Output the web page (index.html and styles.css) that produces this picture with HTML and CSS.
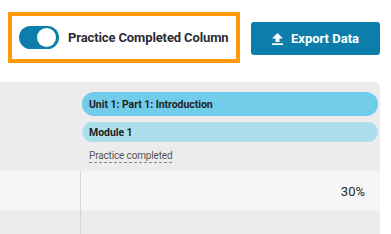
FILE: index.html
```html
<!DOCTYPE html>
<html>
<head>
<meta charset="utf-8">
<link rel="stylesheet" href="styles.css">
</head>
<body>
<div class="page">
  <div class="toolbar">
    <div class="highlight">
      <span class="switch"><span class="knob"></span></span>
      <span class="switch-label">Practice Completed Column</span>
    </div>
    <button class="export">
      <svg class="export-icon" width="11" height="12" viewBox="0 0 11 12">
        <path d="M5.5 0 L11 5.5 H7.5 V9 H3.5 V5.5 H0 Z" fill="#fff"/>
        <rect x="0" y="10.3" width="11" height="1.7" fill="#fff"/>
      </svg>
      <span>Export Data</span>
    </button>
  </div>
  <div class="table">
    <div class="head">
      <div class="head-left"></div>
      <div class="head-cell">
        <div class="pill unit">Unit 1: Part 1: Introduction</div>
        <div class="pill module">Module 1</div>
        <div class="col-title"><span class="dotted">Practice completed</span></div>
      </div>
    </div>
    <div class="row light">
      <div class="cell-left"></div>
      <div class="cell-value">30%</div>
    </div>
    <div class="row dark short">
      <div class="cell-left"></div>
      <div class="cell-value"></div>
    </div>
  </div>
</div>
</body>
</html>
```

FILE: styles.css
```css
html, body {
  margin: 0;
  padding: 0;
  background: #ffffff;
  font-family: Roboto, "Liberation Sans", sans-serif;
  color: #2b2b2b;
}
.page {
  padding: 12px 11px 0 0;
}
.toolbar {
  display: flex;
  align-items: center;
  justify-content: space-between;
  padding-left: 8px;
}
.highlight {
  display: flex;
  align-items: center;
  gap: 9px;
  border: 4px solid #ff9a0a;
  box-sizing: border-box;
  width: 232px;
  height: 51px;
  padding-left: 7px;
}
.switch {
  position: relative;
  display: block;
  width: 40px;
  height: 23px;
  border-radius: 12px;
  background: #0d7eab;
  flex: none;
}
.knob {
  position: absolute;
  right: 3px;
  top: 2px;
  width: 19px;
  height: 19px;
  border-radius: 50%;
  background: #ffffff;
}
.switch-label {
  font-weight: 700;
  font-size: 13px;
  letter-spacing: -0.12px;
  color: #2e2e33;
  white-space: nowrap;
}
.export {
  display: flex;
  align-items: center;
  justify-content: center;
  gap: 8px;
  width: 129px;
  height: 33px;
  margin-top: 2px;
  border: none;
  border-radius: 3px;
  background: #0d7eab;
  color: #ffffff;
  font-family: Roboto, "Liberation Sans", sans-serif;
  font-weight: 700;
  font-size: 13px;
  padding: 0;
}
.export-icon {
  display: block;
}
.table {
  margin-top: 19px;
  width: 380px;
}
.head {
  display: flex;
  background: #ececec;
  border-top-right-radius: 5px;
  height: 89px;
}
.head-left {
  width: 81px;
  flex: none;
}
.head-cell {
  flex: 1;
  padding: 10px 2px 0 1px;
  display: flex;
  flex-direction: column;
}
.pill {
  font-weight: 700;
  font-size: 10.5px;
  letter-spacing: -0.05px;
  color: #1f1f1f;
  padding-left: 7px;
  display: flex;
  align-items: center;
}
.unit {
  height: 24px;
  border-radius: 12px;
  background: #72cdeb;
}
.module {
  margin-top: 6px;
  height: 20px;
  border-radius: 10px;
  background: #acdeeb;
}
.col-title {
  margin-top: 8px;
  padding-left: 7px;
  font-size: 10px;
  letter-spacing: -0.15px;
  color: #555555;
}
.dotted {
  border-bottom: 1px dashed #8a8a8a;
  padding-bottom: 1px;
}
.row {
  display: flex;
  height: 40px;
}
.row.short { height: 23px; }
.row.light { background: #f6f6f6; }
.row.dark { background: #ebebeb; }
.cell-left {
  width: 80px;
  flex: none;
  border-right: 1px solid #d6d6d6;
}
.cell-value {
  flex: 1;
  display: flex;
  align-items: center;
  justify-content: flex-end;
  padding-right: 15px;
  font-size: 13px;
  color: #2b2b2b;
}
```
